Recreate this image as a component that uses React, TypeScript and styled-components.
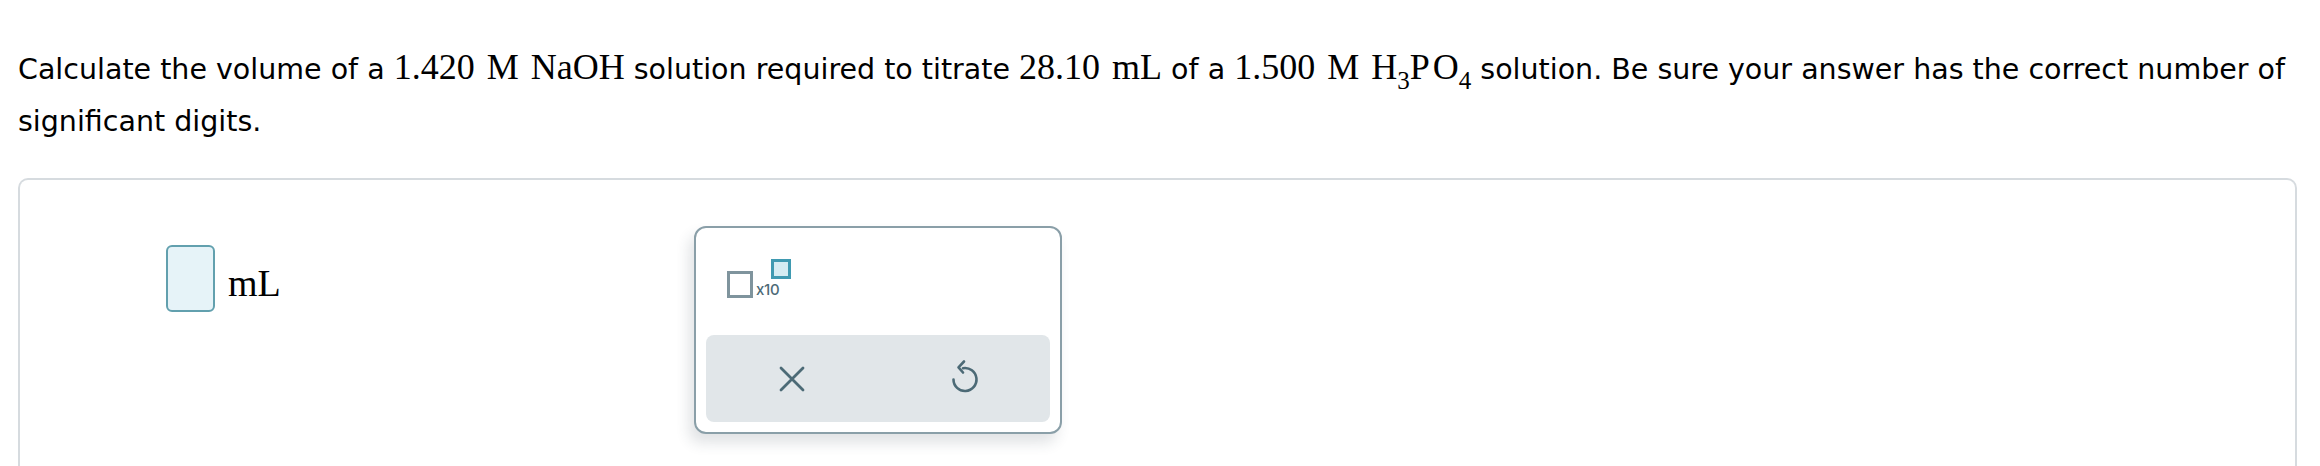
import React from "react";
import styled, { createGlobalStyle } from "styled-components";

const Global = createGlobalStyle`
  html, body { margin: 0; padding: 0; background: #ffffff; overflow: hidden; }
  body { font-family: "DejaVu Sans", Verdana, sans-serif; color: #000; }
`;

const Page = styled.div`
  padding: 44px 23px 0 18px;
  display: flex;
  flex-direction: column;
`;

const Question = styled.p`
  margin: 0;
  font-family: "DejaVu Sans", Verdana, sans-serif;
  font-size: 28.5px;
  line-height: 52px;
  color: #000;
`;

const M = styled.span`
  font-family: "Liberation Serif", "Times New Roman", serif;
  font-size: 36px;
  line-height: 40px;
  white-space: nowrap;
`;

const Sub = styled.sub`
  font-size: 25px;
  vertical-align: -10px;
  line-height: 0;
`;

const Gap = styled.span<{ $w: number }>`
  display: inline-block;
  width: ${(p) => p.$w}px;
`;

const Card = styled.div`
  margin-top: 30px;
  position: relative;
  height: 290px;
  border: 2px solid #d6dbdf;
  border-bottom: none;
  border-radius: 10px 10px 0 0;
  box-sizing: border-box;
  padding: 65px 0 0 146px;
`;

const AnswerRow = styled.div`
  display: flex;
  align-items: flex-end;
  gap: 13px;
`;

const InputBox = styled.div`
  width: 49px;
  height: 67px;
  box-sizing: border-box;
  border: 2px solid #62a0ae;
  border-radius: 6px;
  background: #e6f3f8;
`;

const Unit = styled.span`
  font-family: "Liberation Serif", "Times New Roman", serif;
  font-size: 38px;
  line-height: 38px;
  margin-bottom: 10px;
`;

const Palette = styled.div`
  position: absolute;
  left: 674px;
  top: 46px;
  width: 368px;
  height: 208px;
  box-sizing: border-box;
  border: 2px solid #8a9fa8;
  border-radius: 12px;
  background: #fff;
  box-shadow: -5px 9px 14px rgba(40, 60, 70, 0.14);
  padding: 10px;
  display: flex;
  flex-direction: column;
`;

const Tools = styled.div`
  height: 97px;
  box-sizing: border-box;
  padding: 21px 0 0 21px;
`;

const SciWidget = styled.div`
  display: inline-flex;
  align-items: flex-end;
  height: 39px;
`;

const BaseBox = styled.div`
  width: 26px;
  height: 27px;
  box-sizing: border-box;
  border: 3px solid #7f949d;
  background: #fff;
`;

const Times = styled.span`
  font-family: Inter, "Open Sans", sans-serif;
  font-size: 15px;
  font-weight: 500;
  color: #4e6b77;
  line-height: 15px;
  margin-left: 3px;
  margin-bottom: 1px;
  letter-spacing: -0.3px;
`;

const ExpBox = styled.div`
  align-self: flex-start;
  width: 20px;
  height: 20px;
  box-sizing: border-box;
  border: 3px solid #3f9ab1;
  background: #d4ecf2;
  margin-left: -8px;
`;

const ButtonBar = styled.div`
  flex: 1;
  background: #e1e6e9;
  border-radius: 8px;
  display: grid;
  grid-template-columns: 1fr 1fr;
`;

const IconButton = styled.button`
  border: none;
  background: transparent;
  padding: 0;
  display: flex;
  align-items: center;
  justify-content: center;
  color: #4c6a76;
  cursor: pointer;
`;

const ClearIcon = () => (
  <svg width="26" height="26" viewBox="0 0 26 26" fill="none" stroke="currentColor" strokeWidth="2.8" strokeLinecap="round">
    <path d="M2 2 L24 24 M24 2 L2 24" />
  </svg>
);

const UndoIcon = () => (
  <svg width="30" height="36" viewBox="0 0 30 36" fill="none" stroke="currentColor" strokeWidth="2.6" strokeLinecap="round" strokeLinejoin="round" style={{ marginTop: -4 }}>
    <path d="M4.5 20.5 A11.5 11.5 0 1 0 14 9.2" />
    <path d="M15 2.5 L9.5 8.3 L14 13.5" />
  </svg>
);

export default function App() {
  return (
    <>
      <Global />
      <Page>
        <Question>
          Calculate the volume of a <M>1.420<Gap $w={12} />M<Gap $w={12} />NaOH</M> solution required to titrate{" "}
          <M>28.10<Gap $w={12} />mL</M> of a <M>1.500<Gap $w={12} />M<Gap $w={12} />H<Sub>3</Sub>P<Gap $w={3} />O<Sub>4</Sub></M>{" "}
          <span>solution. Be sure your answer has the correct number of</span>{" "}
          <span>significant digits.</span>
        </Question>
        <Card>
          <AnswerRow>
            <InputBox />
            <Unit>mL</Unit>
          </AnswerRow>
          <Palette>
            <Tools>
              <SciWidget>
                <BaseBox />
                <Times>x10</Times>
                <ExpBox />
              </SciWidget>
            </Tools>
            <ButtonBar>
              <IconButton aria-label="clear"><ClearIcon /></IconButton>
              <IconButton aria-label="undo"><UndoIcon /></IconButton>
            </ButtonBar>
          </Palette>
        </Card>
      </Page>
    </>
  );
}
